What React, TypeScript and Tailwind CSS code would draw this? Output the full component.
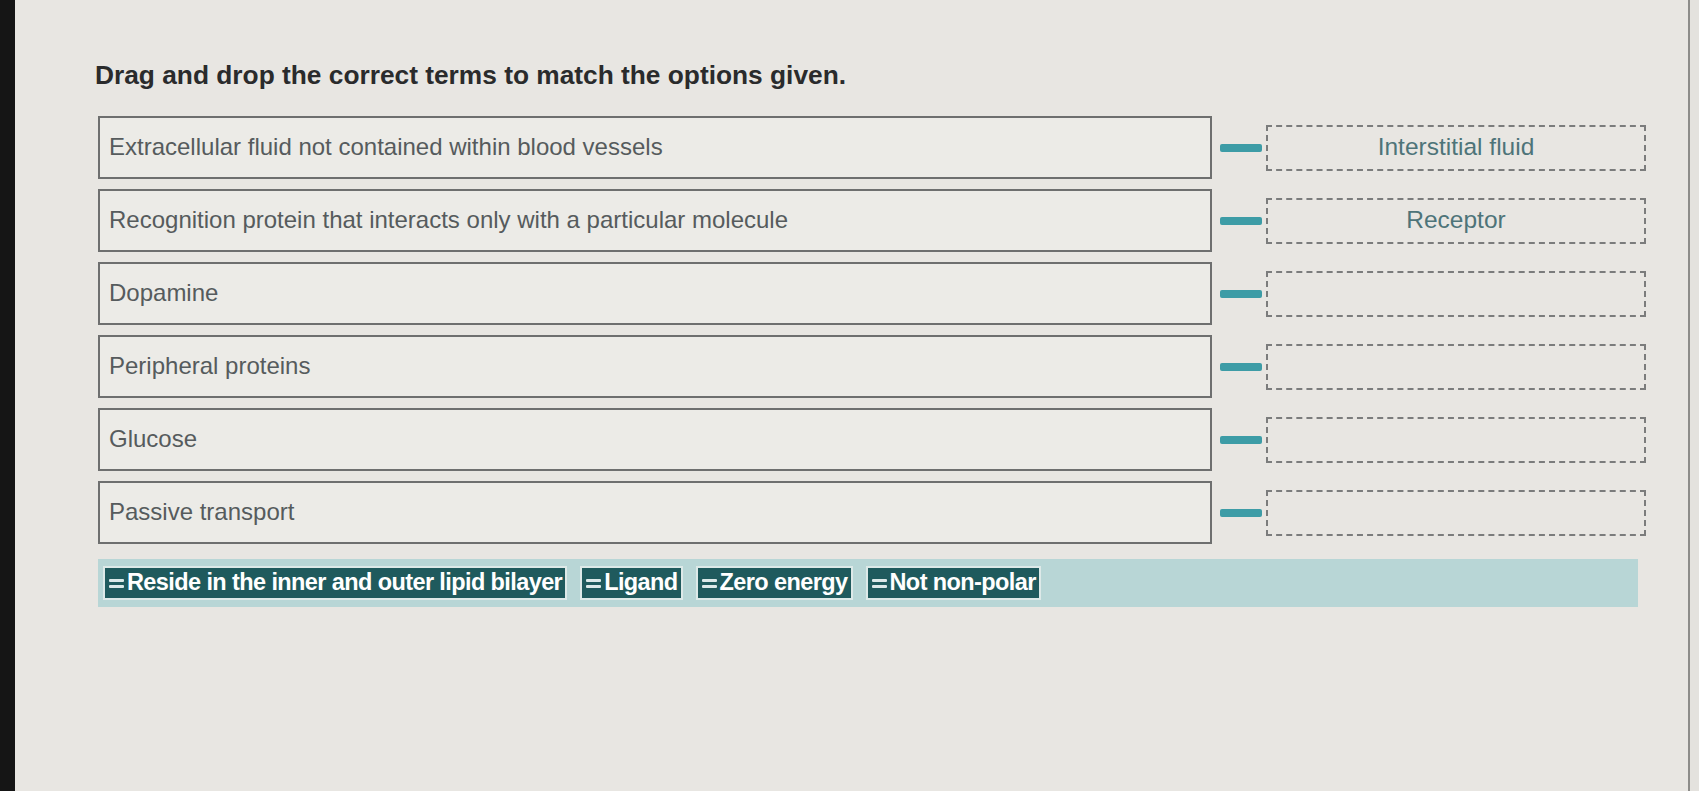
import React from "react";

const prompts = [
  { text: "Extracellular fluid not contained within blood vessels", answer: "Interstitial fluid" },
  { text: "Recognition protein that interacts only with a particular molecule", answer: "Receptor" },
  { text: "Dopamine", answer: "" },
  { text: "Peripheral proteins", answer: "" },
  { text: "Glucose", answer: "" },
  { text: "Passive transport", answer: "" },
];

const bank = [
  "Reside in the inner and outer lipid bilayer",
  "Ligand",
  "Zero energy",
  "Not non-polar",
];

const Grip = () => (
  <span className="mr-[3px] flex flex-col gap-[3px]">
    <span className="block h-[3px] w-[15px] rounded-[1px] bg-[#dce9e9]" />
    <span className="block h-[3px] w-[15px] rounded-[1px] bg-[#dce9e9]" />
  </span>
);

const App = () => {
  return (
    <div className="flex min-h-screen w-full bg-[#e8e6e2] font-['Liberation_Sans',Arial,sans-serif]">
      <div className="w-[15px] shrink-0 bg-[#151515]" />

      <main className="flex-1 pl-[80px] pt-[60px]">
        <h1 className="text-[26.3px] font-bold leading-[30px] text-[#2a2b2c]">
          Drag and drop the correct terms to match the options given.
        </h1>

        <div className="mt-[26px] flex flex-col gap-[10px] pl-[3px]">
          {prompts.map((p, i) => (
            <div key={i} className="flex items-center">
              <div className="flex h-[63px] w-[1114px] items-center border-2 border-[#6e6f6f] bg-[#ecebe7] px-[9px] pb-[2px] text-[24px] text-[#565b5d]">
                {p.text}
              </div>
              <div className="ml-[8px] h-[8px] w-[42px] rounded-[2px] bg-[#3d9ca6]" />
              <div className="ml-[4px] flex h-[46px] w-[380px] items-center justify-center border-2 border-dashed border-[#7b7c7c] text-[24.5px] text-[#4e7479]">
                {p.answer}
              </div>
            </div>
          ))}
        </div>

        <div className="mt-[15px] ml-[3px] flex h-[48px] w-[1540px] items-center gap-[13px] bg-[#b8d6d6] pl-[5px]">
          {bank.map((b) => (
            <div
              key={b}
              className="flex h-[34px] items-center border-2 border-[#dde9e8] bg-[#1f5a5d] pl-[4px] pr-[3px] text-[23.5px] font-bold tracking-[-0.6px] text-white"
            >
              <Grip />
              {b}
            </div>
          ))}
        </div>
      </main>

      <div className="w-[11px] shrink-0 border-l-2 border-[#8d8c89] bg-[#e4e2de]" />
    </div>
  );
};

export default App;
